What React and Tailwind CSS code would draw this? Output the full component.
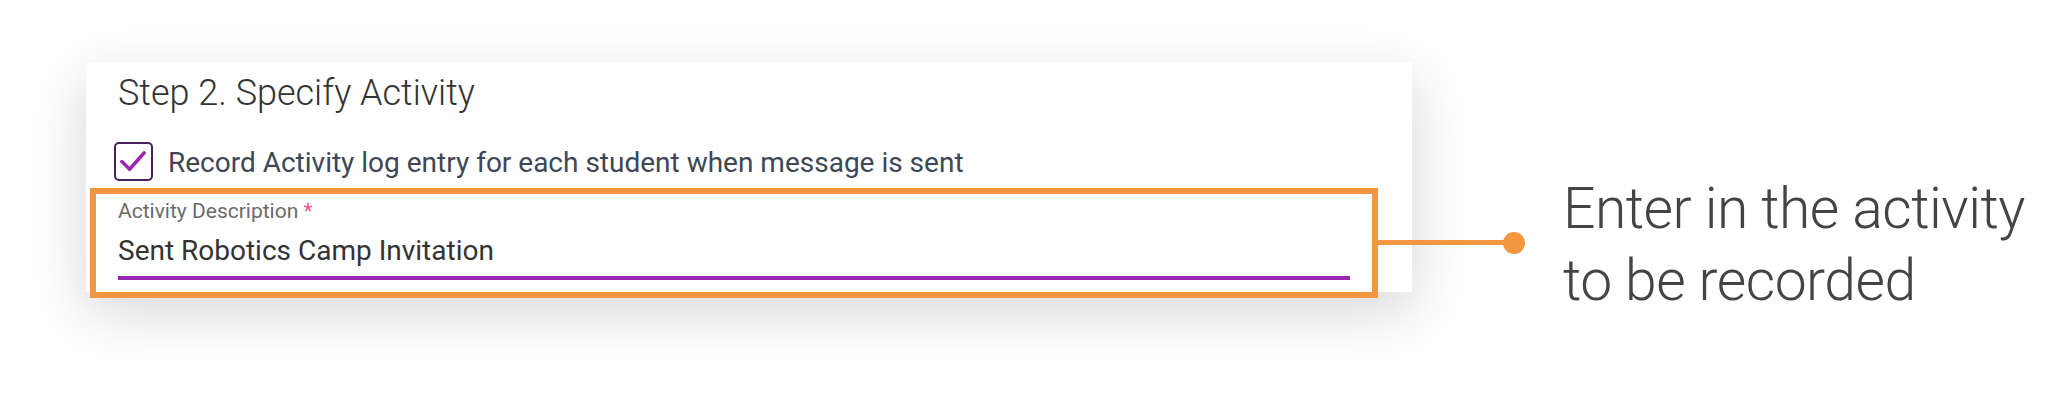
import React from "react";

const roboto = { fontFamily: "Roboto, 'Noto Sans', Arial, sans-serif" };

function CheckBox() {
    return (
        <div className="w-[39px] h-[39px] shrink-0 rounded-[5px] border-[2px] border-[#4a1f5c] bg-white flex items-center justify-center">
            <svg viewBox="0 0 36 36" className="w-[35px] h-[35px]">
                <polyline
                    points="6,18 14,26 29,9"
                    fill="none"
                    stroke="#9c27b0"
                    strokeWidth="3.6"
                    strokeLinecap="round"
                    strokeLinejoin="round"
                />
            </svg>
        </div>
    );
}

export default function App() {
    return (
        <div className="relative w-[2054px] h-[402px] bg-white overflow-hidden" style={roboto}>
            <div className="flex items-start pl-[86px] pt-[62px]">

                {/* Card */}
                <div className="w-[1326px] h-[230px] bg-white shadow-[0_18px_55px_rgba(0,0,0,0.17)] pl-[32px] pr-[62px] pt-[9px] flex flex-col">
                    <h2 className="text-[36px] leading-[44px] font-light text-[#333333]">
                        Step 2. Specify Activity
                    </h2>

                    <div className="flex items-center mt-[27px] -ml-[4px] gap-[15px]">
                        <CheckBox />
                        <span className="text-[28px] leading-[36px] text-[#3d4756] pt-[3px]">
                            Record Activity log entry for each student when message is sent
                        </span>
                    </div>

                    <div className="flex flex-col mt-[18px]">
                        <label className="text-[21px] leading-[24px] text-[#6b6b6b]">
                            Activity Description <span className="text-[#f0508c]">*</span>
                        </label>
                        <div className="text-[28px] leading-[34px] text-[#333333] mt-[11px]">
                            Sent Robotics Camp Invitation
                        </div>
                        <div className="h-[4px] bg-[#9c27b0] mt-[8px]"></div>
                    </div>
                </div>

                {/* Callout text */}
                <div className="ml-[151px] mt-[111px] text-[57px] leading-[72px] font-light text-[#444444] tracking-[-0.5px]">
                    <div>Enter in the activity</div>
                    <div>to be recorded</div>
                </div>
            </div>

            {/* Highlight box */}
            <div className="absolute left-[90px] top-[188px] w-[1288px] h-[110px] border-[6px] border-[#f2963f]"></div>

            {/* Connector */}
            <div className="absolute left-[1378px] top-[240px] w-[130px] h-[5px] bg-[#f2963f]"></div>
            <div className="absolute left-[1503px] top-[232px] w-[22px] h-[22px] rounded-full bg-[#f2963f]"></div>
        </div>
    );
}
